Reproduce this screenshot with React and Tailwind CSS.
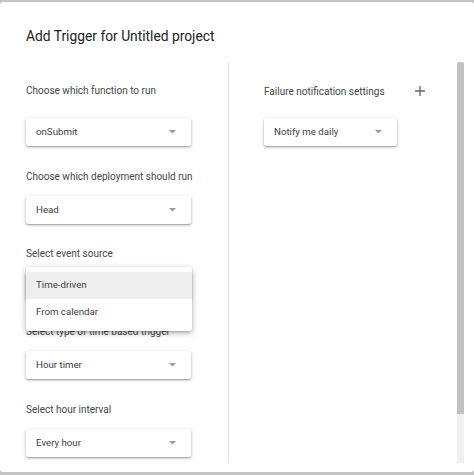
import React from "react";

const font = { fontFamily: "Roboto, 'Liberation Sans', sans-serif" };

function Caret() {
  return (
    <svg width="7" height="4" viewBox="0 0 7 4" className="shrink-0">
      <path d="M0 0 L7 0 L3.5 3.5 Z" fill="#9a9a9a" />
    </svg>
  );
}

function Select({ value, width = "w-[165px]" }) {
  return (
    <div
      className={`${width} h-[28px] bg-white rounded-[2px] flex items-center justify-between pl-[10px] pr-[15px] text-[9.7px] text-[#3c4043] shadow-[0_1px_3px_rgba(0,0,0,0.35),0_1px_1px_rgba(0,0,0,0.12)]`}
    >
      <span>{value}</span>
      <Caret />
    </div>
  );
}

function Label({ children, className = "" }) {
  return (
    <div className={`h-[16px] leading-[16px] text-[10px] text-[#444746] ${className}`}>
      {children}
    </div>
  );
}

export default function App() {
  return (
    <div className="w-[474px] h-[475px] bg-[#c4c4c4] relative" style={font}>
      {/* dialog surface */}
      <div className="absolute left-0 right-0 top-[2px] bottom-[3px] bg-white rounded-[3px] flex flex-col">
        <div className="h-[60px] pl-[26px] pt-[26px] text-[13.8px] leading-[17px] text-[#202124]">
          Add Trigger for Untitled project
        </div>
        <div className="flex flex-1 min-h-0 pr-[10px]">
          {/* left column */}
          <div className="w-[229px] border-r border-[#e3e3e3] pl-[26px] pt-[21px] relative">
            <Label>Choose which function to run</Label>
            <div className="mt-[19px]">
              <Select value="onSubmit" />
            </div>
            <Label className="mt-[23px]">Choose which deployment should run</Label>
            <div className="mt-[11px]">
              <Select value="Head" />
            </div>
            <Label className="mt-[22px]">Select event source</Label>
            <div className="mt-[11px] relative">
              <Select value="Time-driven" />
              {/* open option list */}
              <div className="absolute left-0 top-[-6px] w-[166px] bg-white py-[5px] rounded-[2px] shadow-[0_2px_6px_rgba(0,0,0,0.3),0_1px_2px_rgba(0,0,0,0.15)] z-10 text-[9.7px] text-[#3c4043]">
                <div className="h-[27px] flex items-center pl-[10px] bg-[#eeeeee]">Time-driven</div>
                <div className="h-[27px] flex items-center pl-[10px]">From calendar</div>
              </div>
            </div>
            <Label className="mt-[23px]">Select type of time based trigger</Label>
            <div className="mt-[11px]">
              <Select value="Hour timer" />
            </div>
            <Label className="mt-[23px]">Select hour interval</Label>
            <div className="mt-[11px]">
              <Select value="Every hour" />
            </div>
          </div>
          {/* right column */}
          <div className="flex-1 pl-[35px] pt-[21px]">
            <div className="flex items-center w-[161px] justify-between h-[16px]">
              <span className="text-[10px] text-[#444746]">Failure notification settings</span>
              <svg width="10" height="10" viewBox="0 0 10 10">
                <path d="M5 0 V10 M0 5 H10" stroke="#5f6368" strokeWidth="1.3" />
              </svg>
            </div>
            <div className="mt-[19px]">
              <Select value="Notify me daily" width="w-[133px]" />
            </div>
          </div>
          {/* scrollbar */}
          <div className="w-[7px] bg-[#f0f0f0] flex flex-col">
            <div className="h-[352px] bg-[#c1c1c1] rounded-t-[3px]" />
          </div>
        </div>
        <div className="h-[9px]" />
      </div>
    </div>
  );
}
